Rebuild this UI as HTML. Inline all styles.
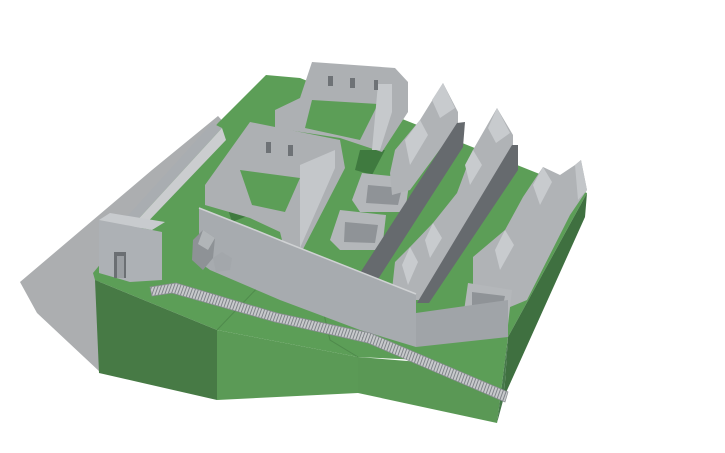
<!DOCTYPE html>
<html><head><style>
html,body{margin:0;padding:0;background:#fff;}
svg{display:block}
</style></head><body>
<svg width="725" height="453" viewBox="0 0 725 453" xmlns="http://www.w3.org/2000/svg">
<defs>
<pattern id="st" width="3" height="3" patternUnits="userSpaceOnUse" patternTransform="rotate(20)">
<rect width="3" height="3" fill="#c8cacc"/><rect width="1" height="3" fill="#80848a"/>
</pattern>
</defs>
<rect width="725" height="453" fill="#fff"/>
<!-- shadow -->
<polygon points="20,282 152,170 218,116 228,127 100,278 100,372 37,313" fill="#acaeb0"/>
<!-- green top surface -->
<polygon points="93,273 218,123 266,75 300,78 587,193 508,337 500,400 420,360 358,357 217,330 95,280" fill="#5c9e57"/>
<!-- darker grass shadows -->
<polygon points="225,200 245,190 250,215 232,222" fill="#3f7a3f"/>
<polygon points="360,150 385,150 372,175 355,170" fill="#3f7a3f"/>
<!-- base faces -->
<polygon points="95,280 217,330 217,400 99,373" fill="#477a45"/>
<polygon points="217,330 358,357 358,393 217,400" fill="#5b9a56"/>
<polygon points="358,357 420,362 500,400 497,423 358,393" fill="#5a9855"/>
<polygon points="508,337 587,193 585,217 504,397" fill="#3f7040"/>
<polygon points="500,400 508,337 504,397 497,423" fill="#46784a"/>
<polyline points="217,330 262,283 320,297 330,340 358,357" fill="none" stroke="#4f8a4c" stroke-width="1"/>
<!-- left long wall -->
<polygon points="122,222 212,123 222,128 132,226" fill="#a9adb1"/>
<polygon points="132,226 222,128 226,140 138,232" fill="#cbcdcf"/>
<!-- back building -->
<polygon points="300,98 312,62 395,68 408,82 408,112 382,152 340,138 275,128 275,110" fill="#adb0b3"/>
<polygon points="312,100 378,104 360,140 305,128" fill="#5c9e57"/>
<polygon points="378,84 392,84 392,112 380,150 372,150" fill="#c6c9cc"/>
<rect x="328" y="76" width="5" height="10" fill="#6e7276"/><rect x="350" y="78" width="5" height="10" fill="#6e7276"/><rect x="374" y="80" width="4" height="10" fill="#6e7276"/>
<!-- front building -->
<polygon points="205,185 250,122 340,140 345,168 300,255 285,252 280,232 250,218 205,205" fill="#adb0b3"/>
<polygon points="240,170 300,178 285,212 252,205" fill="#5c9e57"/>
<polygon points="300,165 335,150 335,168 300,248" fill="#c4c7ca"/>
<rect x="266" y="142" width="5" height="11" fill="#6e7276"/><rect x="288" y="145" width="5" height="11" fill="#6e7276"/>
<!-- small rooms -->
<polygon points="352,200 362,173 410,178 405,212 360,212" fill="#b4b7ba"/>
<polygon points="368,185 402,188 398,205 366,203" fill="#8f9397"/>
<polygon points="330,240 340,210 386,215 382,250 340,250" fill="#b4b7ba"/>
<polygon points="345,222 378,225 375,243 344,242" fill="#8f9397"/>
<!-- row A houses -->
<polygon points="390,173 395,150 420,120 443,83 458,112 458,125 410,190 392,195" fill="#b0b3b6"/>
<polygon points="443,83 455,108 440,118 432,100" fill="#c8cbce"/>
<polygon points="420,120 428,135 410,165 405,140" fill="#c8cbce"/>
<!-- dark wall 1 -->
<polygon points="360,273 457,123 465,122 463,147 373,287" fill="#666a6e"/>
<!-- row B houses -->
<polygon points="392,290 395,262 410,247 433,223 457,193 473,150 497,108 513,135 513,152 427,300 400,300" fill="#b0b3b6"/>
<polygon points="497,108 510,133 496,143 488,128" fill="#c8cbce"/>
<polygon points="473,150 482,165 470,185 465,165" fill="#c8cbce"/>
<polygon points="433,223 442,238 430,258 425,240" fill="#c8cbce"/>
<polygon points="410,247 418,262 408,285 402,265" fill="#c8cbce"/>
<!-- dark wall 2 -->
<polygon points="417,303 512,145 518,145 518,170 429,303" fill="#666a6e"/>
<!-- row C houses -->
<polygon points="473,300 473,257 505,230 523,197 543,167 560,175 575,165 581,160 587,190 570,215 527,300 503,310" fill="#b0b3b6"/>
<polygon points="543,167 552,182 540,205 533,185" fill="#c8cbce"/>
<polygon points="505,230 514,245 500,270 495,250" fill="#c8cbce"/>
<polygon points="575,165 581,160 587,190 578,200" fill="#c3c6c9"/>
<!-- small room bottom right -->
<polygon points="463,318 468,283 512,290 508,325 470,325" fill="#b4b7ba"/>
<polygon points="472,292 505,296 500,318 472,316" fill="#8f9397"/>
<polygon points="474,312 500,314 498,322 474,322" fill="#5c9e57"/>
<!-- main diagonal wall -->
<polygon points="199,208 250,228 287,243 416,294 416,347 360,330 280,300 210,270 199,262" fill="#a7abaf"/>
<polygon points="416,313 508,300 508,337 416,347" fill="#a0a4a8"/>
<polyline points="199,208 250,228 287,243 416,294" fill="none" stroke="#d0d2d4" stroke-width="1.5"/>
<!-- gate tower -->
<polygon points="99,220 152,230 162,232 162,280 130,282 99,273" fill="#adb1b5"/>
<polygon points="99,220 110,213 165,222 152,230" fill="#c8cbce"/>
<rect x="114" y="252" width="12" height="26" fill="#6b6f73"/>
<rect x="117" y="256" width="7" height="22" fill="#9a9ea2"/>
<!-- rocks -->
<polygon points="193,240 203,230 215,238 213,258 203,270 192,260" fill="#8e9296"/>
<polygon points="203,230 215,238 208,250 198,244" fill="#b1b5b8"/>
<polygon points="213,258 222,252 232,258 230,270 216,272" fill="#a3a7ab"/>
<!-- stairs -->
<polygon points="150,287 176,283 277,313 370,333 508,392 505,402 368,343 275,322 172,293 152,296" fill="url(#st)" stroke="#8a8e92" stroke-width="0.7"/>
</svg>
</body></html>
